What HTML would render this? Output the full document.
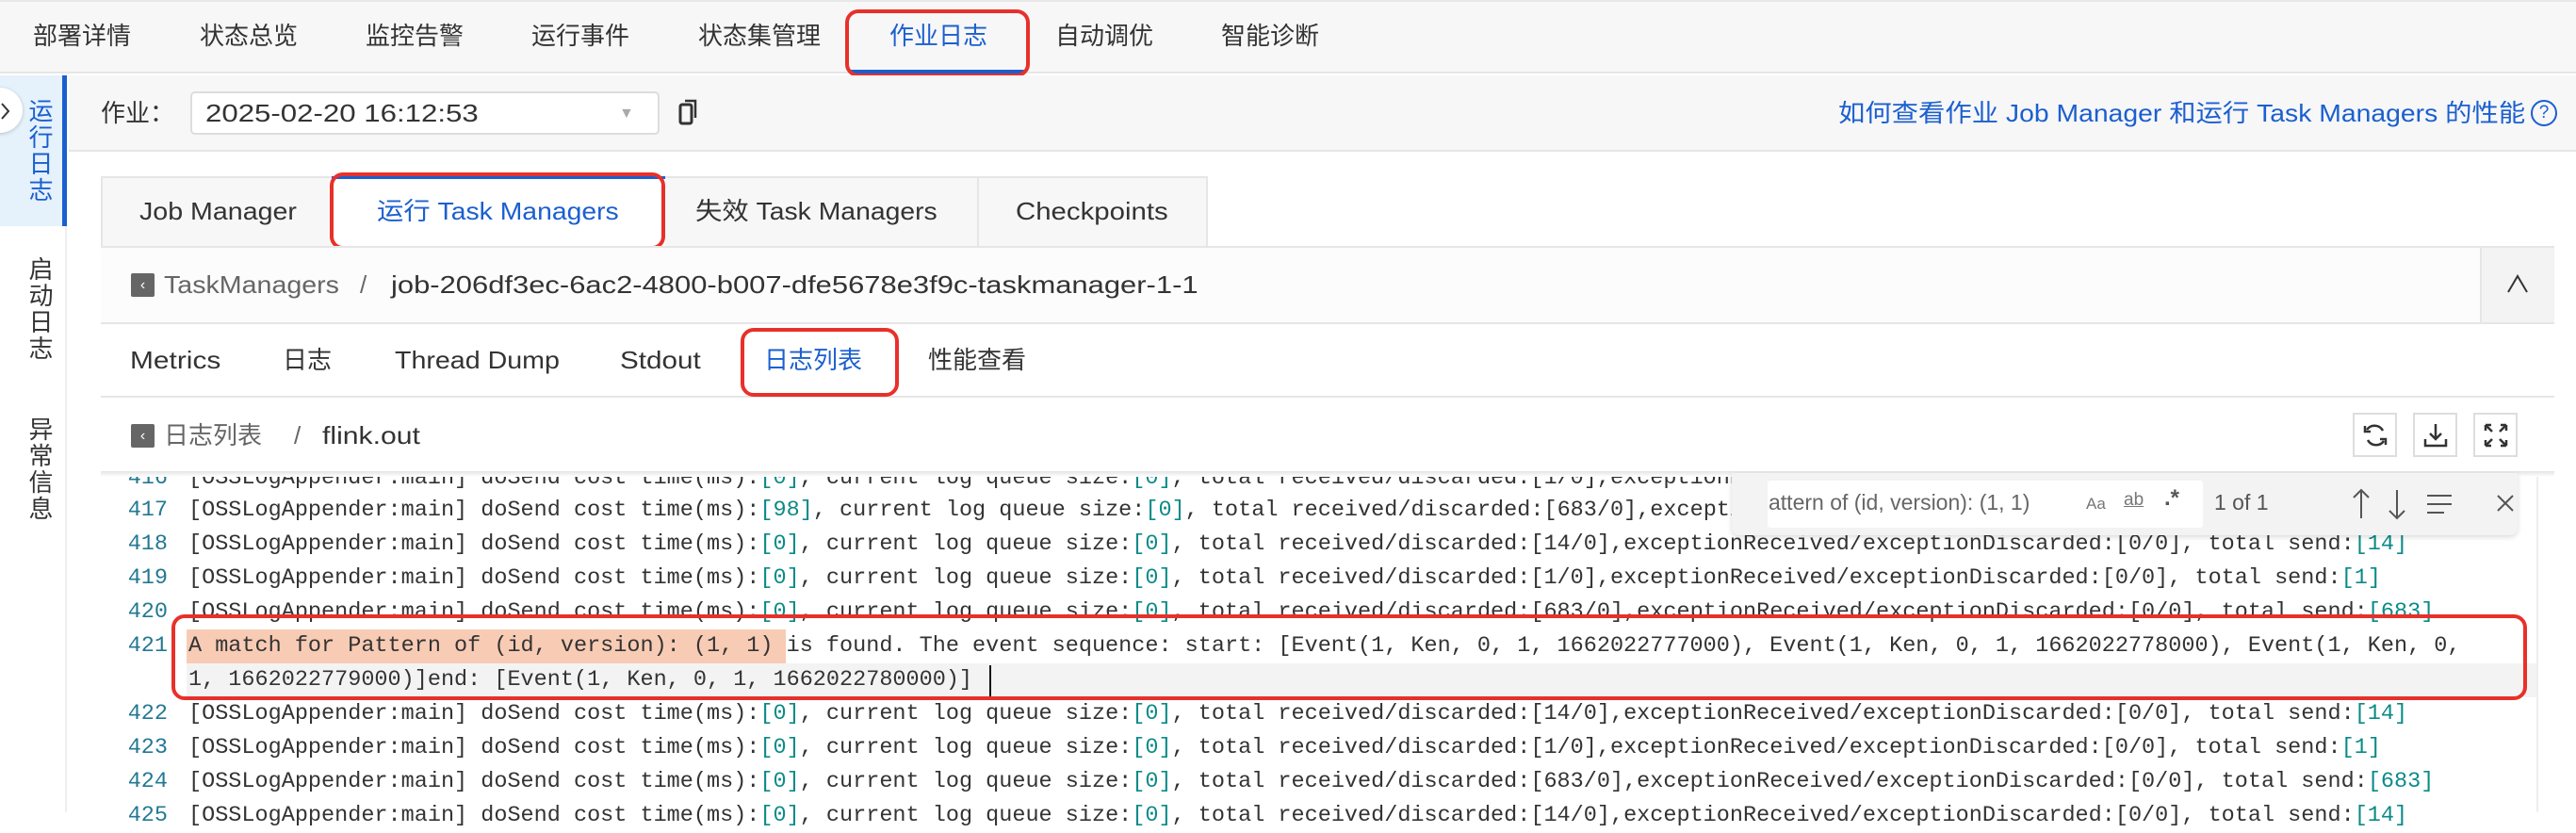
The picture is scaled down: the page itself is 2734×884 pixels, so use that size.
<!DOCTYPE html>
<html><head><meta charset="utf-8"><style>
*{margin:0;padding:0;box-sizing:border-box}
body{width:2734px;height:862px;overflow:hidden;background:#fff;font-family:"Liberation Sans","Noto Sans CJK SC",sans-serif;font-size:26px;color:#333;position:relative}
.a{position:absolute;white-space:nowrap;line-height:30px}
.red{position:absolute;border:4px solid #e8302a;border-radius:14px}
.mono{font-family:"Liberation Mono","DejaVu Sans Mono",monospace;font-size:23.5px;color:#333}
.mono .a{line-height:36px}
.ln{position:absolute;left:120px;width:58px;text-align:right;color:#237893}
.tx{position:absolute;left:200px}
.g{color:#0b8a87}
.v{writing-mode:vertical-rl;letter-spacing:2px;line-height:normal}
.btn{position:absolute;width:47px;height:47px;border:2px solid #ddd;background:#fff}
.w{display:inline-block;transform-origin:0 50%}
</style></head><body>
<!-- top nav -->
<div class="a" style="left:0;top:0;width:2734px;height:78px;background:#f7f7f7;border-top:2px solid #e8e8e8;border-bottom:2px solid #e6e6e6"></div>
<div class="a" style="left:35px;top:23px">部署详情</div>
<div class="a" style="left:212px;top:23px">状态总览</div>
<div class="a" style="left:388px;top:23px">监控告警</div>
<div class="a" style="left:564px;top:23px">运行事件</div>
<div class="a" style="left:741px;top:23px">状态集管理</div>
<div class="a" style="left:944px;top:23px;color:#1b5fcf">作业日志</div>
<div class="a" style="left:903px;top:74px;width:184px;height:4px;background:#1b5fcf"></div>
<div class="a" style="left:1120px;top:23px">自动调优</div>
<div class="a" style="left:1296px;top:23px">智能诊断</div>
<div class="red" style="left:897px;top:10px;width:196px;height:72px"></div>
<!-- sidebar -->
<div class="a" style="left:0;top:80px;width:71px;height:782px;background:#fff;border-right:2px solid #eee"></div>
<div class="a" style="left:0;top:80px;width:71px;height:160px;background:#e5f1fb;border-right:5px solid #1b5fcf"></div>
<div class="a v" style="left:24px;top:104px;color:#1b5fcf">运行日志</div>
<div class="a v" style="left:24px;top:272px">启动日志</div>
<div class="a v" style="left:24px;top:442px">异常信息</div>
<div class="a" style="left:-24px;top:93px;width:48px;height:48px;border-radius:50%;background:#fff;box-shadow:0 1px 4px rgba(0,0,0,.2)"></div>
<svg class="a" style="left:0;top:108px" width="12" height="20"><path d="M2 2l7 8-7 8" fill="none" stroke="#333" stroke-width="2"/></svg>
<!-- job row -->
<div class="a" style="left:73px;top:80px;width:2661px;height:81px;background:#f7f7f7;border-bottom:2px solid #e6e6e6"></div>
<div class="a" style="left:107px;top:105px">作业：</div>
<div class="a" style="left:202px;top:97px;width:498px;height:46px;background:#fff;border:2px solid #ddd;border-radius:5px"></div>
<div class="a" style="left:218px;top:105px"><span class="w" style="transform:scaleX(1.2)">2025-02-20 16:12:53</span></div>
<div class="a" style="left:657px;top:106px;font-size:16px;color:#aaa">▼</div>
<svg class="a" style="left:718px;top:105px" width="26" height="30"><rect x="4" y="6" width="12" height="20" rx="2" fill="none" stroke="#333" stroke-width="3"/><path d="M9 2h11v18" fill="none" stroke="#333" stroke-width="2.5"/></svg>
<div class="a" style="left:1951px;top:105px;color:#1b5fcf"><span class="w" style="transform:scaleX(1.09)">如何查看作业 Job Manager 和运行 Task Managers 的性能</span></div>
<div class="a" style="left:2686px;top:106px;width:28px;height:28px;border:2px solid #1b5fcf;border-radius:50%;color:#1b5fcf;font-size:19px;text-align:center;line-height:24px">?</div>
<!-- main tabs -->
<div class="a" style="left:107px;top:187px;width:1175px;height:76px;background:#f7f7f7;border:2px solid #e6e6e6"></div>
<div class="a" style="left:352px;top:187px;width:354px;height:76px;background:#fff;border-top:3px solid #1b5fcf"></div>
<div class="a" style="left:1037px;top:187px;width:2px;height:76px;background:#e6e6e6"></div>
<div class="a" style="left:148px;top:209px"><span class="w" style="transform:scaleX(1.1)">Job Manager</span></div>
<div class="a" style="left:400px;top:209px;color:#1b5fcf"><span class="w" style="transform:scaleX(1.09)">运行 Task Managers</span></div>
<div class="a" style="left:738px;top:209px"><span class="w" style="transform:scaleX(1.09)">失效 Task Managers</span></div>
<div class="a" style="left:1078px;top:209px"><span class="w" style="transform:scaleX(1.13)">Checkpoints</span></div>
<div class="red" style="left:350px;top:183px;width:356px;height:82px"></div>
<!-- breadcrumb panel -->
<div class="a" style="left:107px;top:261px;width:2604px;height:83px;background:#fcfcfc;border-top:2px solid #e6e6e6;border-bottom:2px solid #e6e6e6"></div>
<div class="a" style="left:2632px;top:263px;width:79px;height:79px;background:#f3f3f3;border-left:2px solid #e6e6e6"></div>
<svg class="a" style="left:2660px;top:290px" width="24" height="22"><path d="M2 20L12 3l10 17" fill="none" stroke="#333" stroke-width="2"/></svg>
<div class="a" style="left:139px;top:290px;width:25px;height:25px;background:#666;border-radius:2px;color:#fff;font-size:16px;text-align:center;line-height:25px">‹</div>
<div class="a" style="left:174px;top:287px;color:#666"><span class="w" style="transform:scaleX(1.1)">TaskManagers</span></div>
<div class="a" style="left:382px;top:287px;color:#666">/</div>
<div class="a" style="left:415px;top:287px"><span class="w" style="transform:scaleX(1.19)">job-206df3ec-6ac2-4800-b007-dfe5678e3f9c-taskmanager-1-1</span></div>
<!-- sub tabs -->
<div class="a" style="left:107px;top:420px;width:2604px;height:2px;background:#e6e6e6"></div>
<div class="a" style="left:138px;top:367px"><span class="w" style="transform:scaleX(1.15)">Metrics</span></div>
<div class="a" style="left:300px;top:367px">日志</div>
<div class="a" style="left:419px;top:367px"><span class="w" style="transform:scaleX(1.1)">Thread Dump</span></div>
<div class="a" style="left:658px;top:367px"><span class="w" style="transform:scaleX(1.14)">Stdout</span></div>
<div class="a" style="left:811px;top:367px;color:#1b5fcf">日志列表</div>
<div class="a" style="left:985px;top:367px">性能查看</div>
<div class="red" style="left:786px;top:348px;width:168px;height:73px"></div>
<!-- log header -->
<div class="a" style="left:139px;top:450px;width:25px;height:25px;background:#666;border-radius:2px;color:#fff;font-size:16px;text-align:center;line-height:25px">‹</div>
<div class="a" style="left:174px;top:447px;color:#666">日志列表</div>
<div class="a" style="left:312px;top:447px;color:#666">/</div>
<div class="a" style="left:342px;top:447px"><span class="w" style="transform:scaleX(1.16)">flink.out</span></div>
<div class="btn" style="left:2497px;top:438px"></div>
<div class="btn" style="left:2561px;top:438px"></div>
<div class="btn" style="left:2625px;top:438px"></div>
<svg class="a" style="left:2507px;top:448px" width="28" height="28"><path d="M22 9A10 10 0 0 0 5 8M6 19a10 10 0 0 0 17 1" fill="none" stroke="#333" stroke-width="2.5"/><path d="M3 4v6h6M25 24v-6h-6" fill="none" stroke="#333" stroke-width="2.5"/></svg>
<svg class="a" style="left:2571px;top:448px" width="28" height="28"><path d="M14 2v16M8 12l6 6 6-6M3 18v7h22v-7" fill="none" stroke="#333" stroke-width="2.5"/></svg>
<svg class="a" style="left:2635px;top:448px" width="28" height="28"><path d="M3 3l7 7M3 3h6M3 3v6M25 3l-7 7M25 3h-6M25 3v6M3 25l7-7M3 25h6M3 25v-6M25 25l-7-7M25 25h-6M25 25v-6" fill="none" stroke="#333" stroke-width="2.5"/></svg>
<!-- log area -->
<div class="a" style="left:107px;top:500px;width:2604px;height:362px;background:#fff"></div>
<div class="a" style="left:2692px;top:502px;width:2px;height:360px;background:#eee"></div>
<div class="a" style="left:198px;top:704px;width:2494px;height:36px;background:#f3f3f3"></div>
<div class="a" style="left:198px;top:668px;width:636px;height:36px;background:#f8cbb5"></div>
<div class="a" style="left:1050px;top:706px;width:2px;height:34px;background:#111"></div>
<div class="mono" style="position:absolute;left:0;top:0">
<div class="a ln" style="top:490px">416</div><div class="a tx" style="top:490px">[OSSLogAppender:main] doSend cost time(ms):<span class="g">[0]</span>, current log queue size:<span class="g">[0]</span>, total received/discarded:[1/0],exceptionReceived/exceptionDiscarded:[0/0], total send:<span class="g">[1]</span></div>
<div class="a ln" style="top:524px">417</div><div class="a tx" style="top:524px">[OSSLogAppender:main] doSend cost time(ms):<span class="g">[98]</span>, current log queue size:<span class="g">[0]</span>, total received/discarded:[683/0],exceptionReceived/exceptionDiscarded:[0/0], total send:<span class="g">[683]</span></div>
<div class="a ln" style="top:560px">418</div><div class="a tx" style="top:560px">[OSSLogAppender:main] doSend cost time(ms):<span class="g">[0]</span>, current log queue size:<span class="g">[0]</span>, total received/discarded:[14/0],exceptionReceived/exceptionDiscarded:[0/0], total send:<span class="g">[14]</span></div>
<div class="a ln" style="top:596px">419</div><div class="a tx" style="top:596px">[OSSLogAppender:main] doSend cost time(ms):<span class="g">[0]</span>, current log queue size:<span class="g">[0]</span>, total received/discarded:[1/0],exceptionReceived/exceptionDiscarded:[0/0], total send:<span class="g">[1]</span></div>
<div class="a ln" style="top:632px">420</div><div class="a tx" style="top:632px">[OSSLogAppender:main] doSend cost time(ms):<span class="g">[0]</span>, current log queue size:<span class="g">[0]</span>, total received/discarded:[683/0],exceptionReceived/exceptionDiscarded:[0/0], total send:<span class="g">[683]</span></div>
<div class="a ln" style="top:668px">421</div><div class="a tx" style="top:668px">A match for Pattern of (id, version): (1, 1) is found. The event sequence: start: [Event(1, Ken, 0, 1, 1662022777000), Event(1, Ken, 0, 1, 1662022778000), Event(1, Ken, 0,</div>
<div class="a tx" style="top:704px">1, 1662022779000)]end: [Event(1, Ken, 0, 1, 1662022780000)]</div>
<div class="a ln" style="top:740px">422</div><div class="a tx" style="top:740px">[OSSLogAppender:main] doSend cost time(ms):<span class="g">[0]</span>, current log queue size:<span class="g">[0]</span>, total received/discarded:[14/0],exceptionReceived/exceptionDiscarded:[0/0], total send:<span class="g">[14]</span></div>
<div class="a ln" style="top:776px">423</div><div class="a tx" style="top:776px">[OSSLogAppender:main] doSend cost time(ms):<span class="g">[0]</span>, current log queue size:<span class="g">[0]</span>, total received/discarded:[1/0],exceptionReceived/exceptionDiscarded:[0/0], total send:<span class="g">[1]</span></div>
<div class="a ln" style="top:812px">424</div><div class="a tx" style="top:812px">[OSSLogAppender:main] doSend cost time(ms):<span class="g">[0]</span>, current log queue size:<span class="g">[0]</span>, total received/discarded:[683/0],exceptionReceived/exceptionDiscarded:[0/0], total send:<span class="g">[683]</span></div>
<div class="a ln" style="top:848px">425</div><div class="a tx" style="top:848px">[OSSLogAppender:main] doSend cost time(ms):<span class="g">[0]</span>, current log queue size:<span class="g">[0]</span>, total received/discarded:[14/0],exceptionReceived/exceptionDiscarded:[0/0], total send:<span class="g">[14]</span></div>
</div>
<div class="a" style="left:107px;top:490px;width:2604px;height:12px;background:#fff"></div>
<div class="a" style="left:107px;top:500px;width:2604px;height:6px;background:linear-gradient(#e4e4e4,#fff)"></div>
<div class="red" style="left:182px;top:652px;width:2500px;height:91px"></div>
<!-- find widget -->
<div class="a" style="left:1838px;top:502px;width:834px;height:66px;background:#f3f3f3;border-radius:0 0 8px 8px;box-shadow:0 2px 6px rgba(0,0,0,.15)"></div>
<div class="a" style="left:1876px;top:510px;width:462px;height:50px;background:#fff;border-radius:3px"></div>
<div class="a" style="left:1877px;top:518px;font-size:23px;color:#666">attern of (id, version): (1, 1)</div>
<div class="a" style="left:2214px;top:520px;font-size:17px;color:#777">Aa</div>
<div class="a" style="left:2254px;top:516px;font-size:19px;color:#777;text-decoration:underline">ab</div>
<div class="a" style="left:2297px;top:514px;font-size:24px;color:#555;font-weight:bold">.*</div>
<div class="a" style="left:2350px;top:518px;font-size:23px;color:#555">1 of 1</div>
<svg class="a" style="left:2496px;top:518px" width="180" height="34"><g fill="none" stroke="#555" stroke-width="2"><path d="M10 32V2M2 10l8-8 8 8M48 2v30M40 24l8 8 8-8M80 8h26M80 17h26M80 26h18M155 8l16 16M171 8l-16 16"/></g></svg>
</body></html>
